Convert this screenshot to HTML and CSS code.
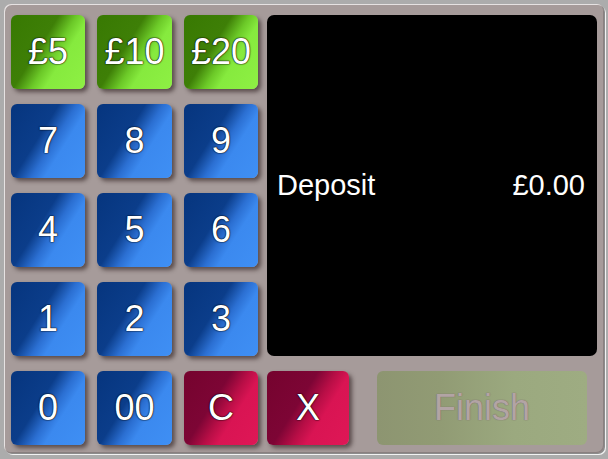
FILE: index.html
```html
<!DOCTYPE html>
<html lang="en">
<head>
    <meta charset="UTF-8">
    <meta name="viewport" content="width=device-width, initial-scale=1.0">
    <title>Deposit Keypad</title>
    <link rel="stylesheet" href="styles.css">
</head>
<body>
    <div class="till">
        <button class="key cash">£5</button>
        <button class="key cash wide">£10</button>
        <button class="key cash">£20</button>

        <div class="display">
            <span>Deposit</span>
            <span id="amount">£0.00</span>
        </div>

        <button class="key num">7</button>
        <button class="key num wide">8</button>
        <button class="key num">9</button>

        <button class="key num">4</button>
        <button class="key num wide">5</button>
        <button class="key num">6</button>

        <button class="key num">1</button>
        <button class="key num wide">2</button>
        <button class="key num">3</button>

        <button class="key num">0</button>
        <button class="key num wide">00</button>
        <button class="key danger">C</button>
        <button class="key danger cancel">X</button>
        <button class="finish" disabled>Finish</button>
    </div>
</body>
</html>
```

FILE: styles.css
```css
body {
    margin: 0;
    background: #acacac;
    font-family: 'Liberation Sans', Arial, sans-serif;
}
.till {
    margin: 4px;
    width: 586px;
    height: 430px;
    padding: 11px 7px 8px 7px;
    background: #a69b9a;
    border-radius: 7px;
    box-shadow: inset 1px 1px 0 #e6e2e2, inset -1px -1px 0 #8a8080, 1px 1px 0 #8c8c8c, 2px 2px 0 #f2f2f2;
    display: grid;
    grid-template-columns: 86px 87px 83px 82px 248px;
    grid-template-rows: repeat(5, 74px);
    row-gap: 15px;
}
.key {
    width: 74px;
    height: 74px;
    border: none;
    border-radius: 6px;
    padding: 0;
    color: #fff;
    font-family: inherit;
    font-size: 36px;
    text-shadow: 0 0 1px #000, 0 0 1px #000, 0 0 2px rgba(0, 0, 0, 0.6);
    box-shadow: 3px 3px 4px rgba(40, 25, 25, 0.6);
    cursor: pointer;
}
.key.wide {
    width: 75px;
}
/* dark top-left half, bright lower-right half, soft band in between */
.cash {
    background: linear-gradient(122deg, #387902 0%, #3e7f07 40%, #6cc928 55%, #86ea3e 66%, #8ef044 100%);
}
.num {
    background: linear-gradient(122deg, #06357e 0%, #0b3d8a 40%, #2b6fd2 55%, #3b89ef 66%, #3f8ff4 100%);
}
.danger {
    background: linear-gradient(122deg, #75032e 0%, #7d0535 40%, #b80e46 55%, #d91453 66%, #df1756 100%);
}
.key.cancel {
    width: 82px;
}
.display {
    grid-column: 4 / 6;
    grid-row: 1 / 5;
    background: #000;
    border-radius: 7px;
    color: #fff;
    font-size: 29px;
    display: flex;
    align-items: center;
    justify-content: space-between;
    padding: 0 12px 0 10px;
}
.finish {
    grid-column: 5;
    grid-row: 5;
    margin: 0 10px 0 28px;
    border: none;
    border-radius: 6px;
    background: linear-gradient(90deg, #8d9571 0%, #919b74 30%, #9ba97f 65%, #9eac82 100%);
    color: #b2a4a4;
    font-family: inherit;
    font-size: 36px;
    text-shadow: 0 0 1px #7e7070, 0 0 1px #7e7070;
}
```
